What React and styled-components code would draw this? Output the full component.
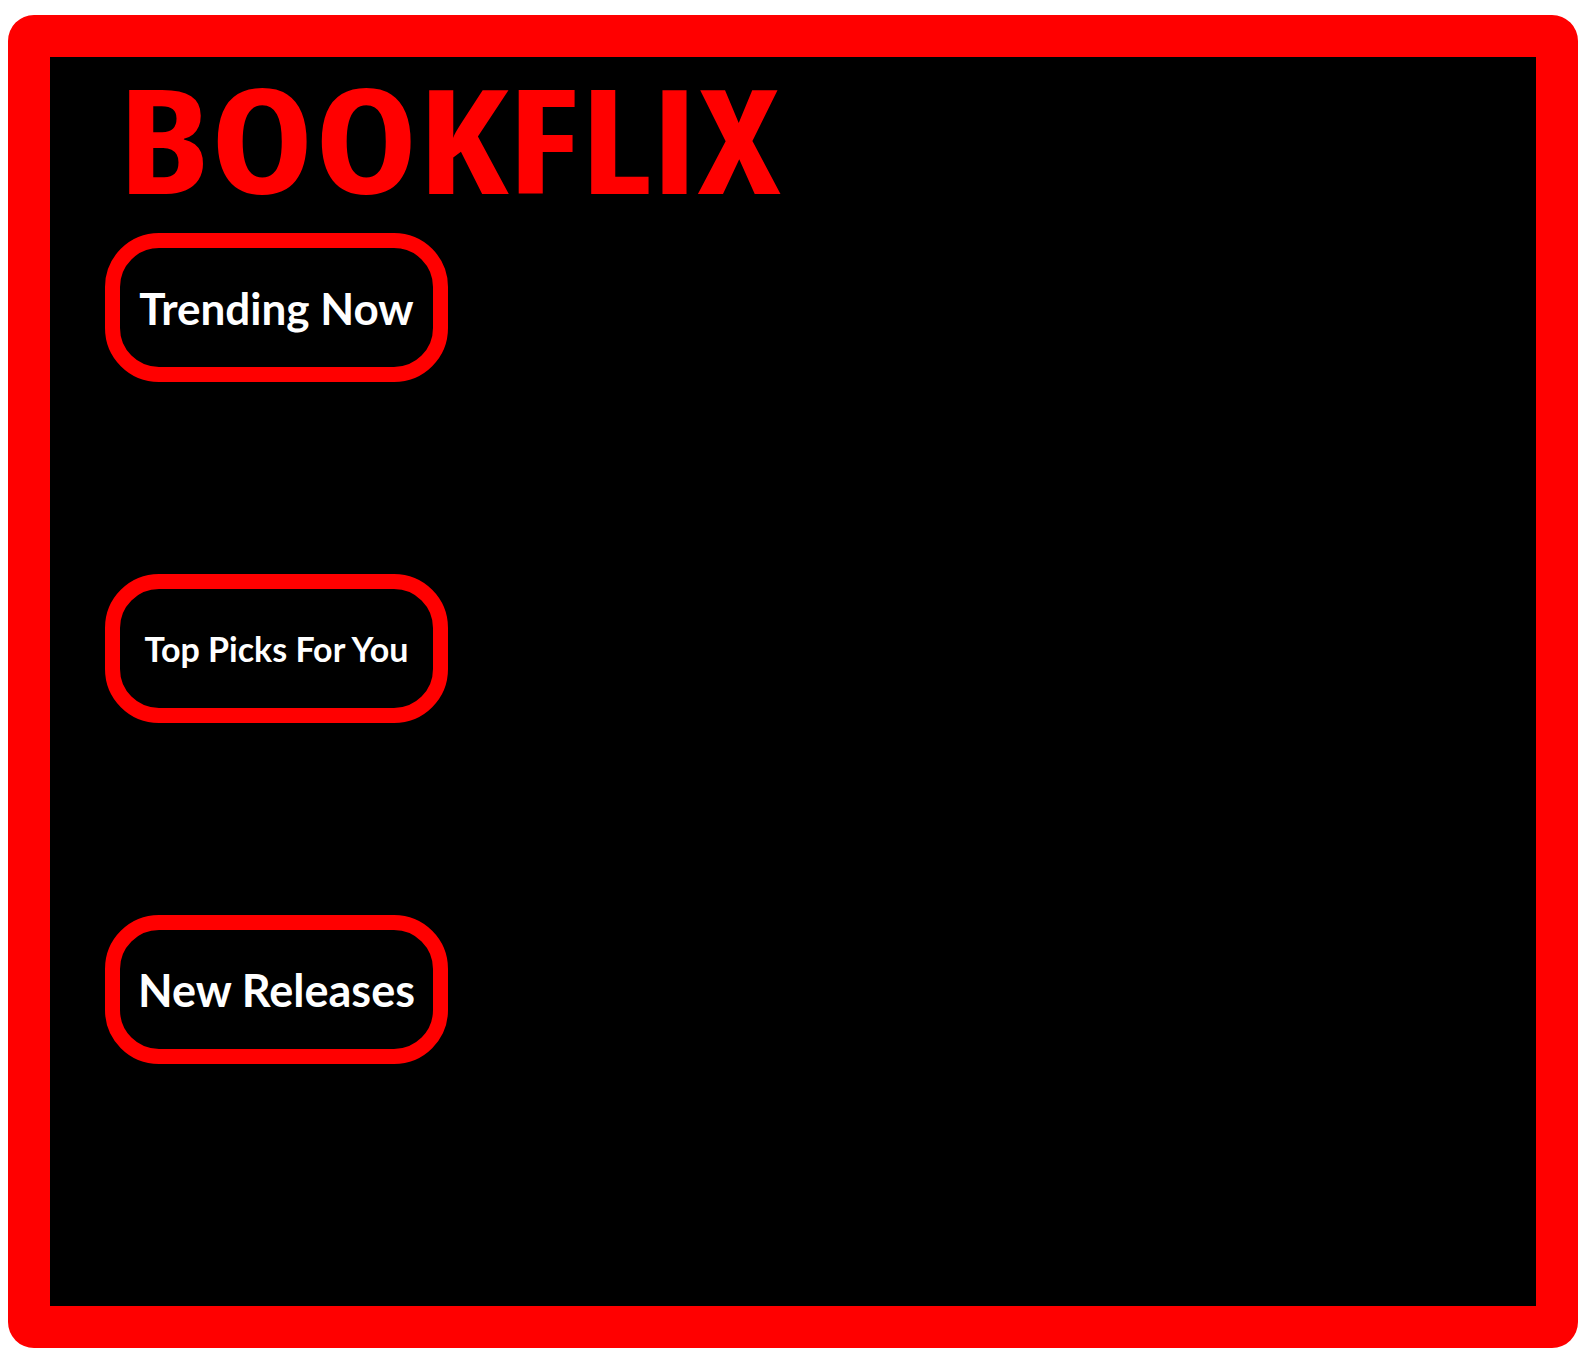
import React from 'react'
import styled, { createGlobalStyle } from 'styled-components'

const RED = '#ff0000'
const BLACK = '#000000'
const WHITE = '#ffffff'
const DISPLAY = '"Open Sans", "DejaVu Sans Condensed", "Liberation Sans", sans-serif'
const LABEL = 'Lato, "Open Sans", "Liberation Sans", sans-serif'

const GlobalStyle = createGlobalStyle`
  html, body {
    background: ${ WHITE };
  }
  body {
    margin: 15px 10px 10px 8px;
  }
`

const Frame = styled.main`
  box-sizing: border-box;
  width: 1570px;
  height: 1333px;
  border: 42px solid ${ RED };
  border-radius: 26px;
  background-color: ${ BLACK };
  padding: 0 0 0 55px;
  display: flex;
  flex-direction: column;
  align-items: flex-start;
`

// condensed face, widened a little so the wordmark fills out like the brand type
const Logo = styled.h1`
  margin: 0 0 14px 13px;
  font-family: ${ DISPLAY };
  font-stretch: 75%;
  font-weight: 700;
  font-size: 146px;
  line-height: 162px;
  color: ${ RED };
  transform: scaleX(1.2);
  transform-origin: left center;
`

const Shelves = styled.nav`
  display: flex;
  flex-direction: column;
  gap: 192px;
`

const ShelfButton = styled.button`
  box-sizing: border-box;
  width: 343px;
  height: 149px;
  border: 15px solid ${ RED };
  border-radius: 54px;
  background-color: ${ BLACK };
  color: ${ WHITE };
  font-family: ${ LABEL };
  font-weight: 700;
  font-size: ${ props => props.size }px;
  padding: 0;
  display: flex;
  align-items: center;
  justify-content: center;
  cursor: pointer;
`

const shelves = [
  { label: 'Trending Now', size: 44 },
  { label: 'Top Picks For You', size: 34 },
  { label: 'New Releases', size: 45 },
]

const App = () => {
  return (
    <>
      <GlobalStyle />
      <Frame>
        <Logo>BOOKFLIX</Logo>
        <Shelves>
          {shelves.map(shelf => (
            <ShelfButton key={shelf.label} size={shelf.size}>
              {shelf.label}
            </ShelfButton>
          ))}
        </Shelves>
      </Frame>
    </>
  )
}

export default App
